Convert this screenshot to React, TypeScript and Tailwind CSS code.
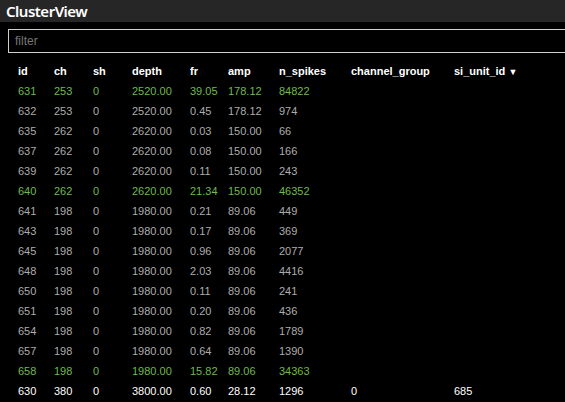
import React from 'react';

type Row = {
  id: string;
  ch: string;
  sh: string;
  depth: string;
  fr: string;
  amp: string;
  n: string;
  group?: string;
  si?: string;
  tone: 'green' | 'gray' | 'white';
};

const rows: Row[] = [
  { id: '631', ch: '253', sh: '0', depth: '2520.00', fr: '39.05', amp: '178.12', n: '84822', tone: 'green' },
  { id: '632', ch: '253', sh: '0', depth: '2520.00', fr: '0.45', amp: '178.12', n: '974', tone: 'gray' },
  { id: '635', ch: '262', sh: '0', depth: '2620.00', fr: '0.03', amp: '150.00', n: '66', tone: 'gray' },
  { id: '637', ch: '262', sh: '0', depth: '2620.00', fr: '0.08', amp: '150.00', n: '166', tone: 'gray' },
  { id: '639', ch: '262', sh: '0', depth: '2620.00', fr: '0.11', amp: '150.00', n: '243', tone: 'gray' },
  { id: '640', ch: '262', sh: '0', depth: '2620.00', fr: '21.34', amp: '150.00', n: '46352', tone: 'green' },
  { id: '641', ch: '198', sh: '0', depth: '1980.00', fr: '0.21', amp: '89.06', n: '449', tone: 'gray' },
  { id: '643', ch: '198', sh: '0', depth: '1980.00', fr: '0.17', amp: '89.06', n: '369', tone: 'gray' },
  { id: '645', ch: '198', sh: '0', depth: '1980.00', fr: '0.96', amp: '89.06', n: '2077', tone: 'gray' },
  { id: '648', ch: '198', sh: '0', depth: '1980.00', fr: '2.03', amp: '89.06', n: '4416', tone: 'gray' },
  { id: '650', ch: '198', sh: '0', depth: '1980.00', fr: '0.11', amp: '89.06', n: '241', tone: 'gray' },
  { id: '651', ch: '198', sh: '0', depth: '1980.00', fr: '0.20', amp: '89.06', n: '436', tone: 'gray' },
  { id: '654', ch: '198', sh: '0', depth: '1980.00', fr: '0.82', amp: '89.06', n: '1789', tone: 'gray' },
  { id: '657', ch: '198', sh: '0', depth: '1980.00', fr: '0.64', amp: '89.06', n: '1390', tone: 'gray' },
  { id: '658', ch: '198', sh: '0', depth: '1980.00', fr: '15.82', amp: '89.06', n: '34363', tone: 'green' },
  { id: '630', ch: '380', sh: '0', depth: '3800.00', fr: '0.60', amp: '28.12', n: '1296', group: '0', si: '685', tone: 'white' },
];

const toneClass = {
  green: 'text-[#6fbb4e]',
  gray: 'text-[#adadad]',
  white: 'text-white',
};

const cols = 'grid grid-cols-[36px_39px_39px_58px_38px_51px_72px_103px_1fr] pl-[18px] items-center';

export default function App() {
  return (
    <div className="w-[565px] h-[402px] bg-black overflow-hidden font-['Liberation_Sans',Arial,sans-serif]">
      <div className="h-[22px] bg-[#262626] flex items-center px-[6px]">
        <h1 className="text-white text-[15px] font-semibold font-['Noto_Sans',sans-serif] leading-none tracking-[-0.5px]">
          ClusterView
        </h1>
      </div>

      <div className="pl-[8px] pt-[6px]">
        <input
          placeholder="filter"
          className="w-[580px] h-[24px] border border-[#d0d0d0] bg-black px-[6px] text-[12px] text-white placeholder:text-[#777] outline-none"
        />
      </div>

      <div className="mt-[8px]">
        <div className={`${cols} h-[20px] text-white text-[11px] font-bold`}>
          <span>id</span>
          <span>ch</span>
          <span>sh</span>
          <span>depth</span>
          <span>fr</span>
          <span>amp</span>
          <span>n_spikes</span>
          <span>channel_group</span>
          <span>si_unit_id <span className="text-[9px]">▼</span></span>
        </div>

        {rows.map((r) => (
          <div key={r.id} className={`${cols} h-[20px] text-[11px] ${toneClass[r.tone]}`}>
            <span>{r.id}</span>
            <span>{r.ch}</span>
            <span>{r.sh}</span>
            <span>{r.depth}</span>
            <span>{r.fr}</span>
            <span>{r.amp}</span>
            <span>{r.n}</span>
            <span>{r.group ?? ''}</span>
            <span>{r.si ?? ''}</span>
          </div>
        ))}
      </div>
    </div>
  );
}
